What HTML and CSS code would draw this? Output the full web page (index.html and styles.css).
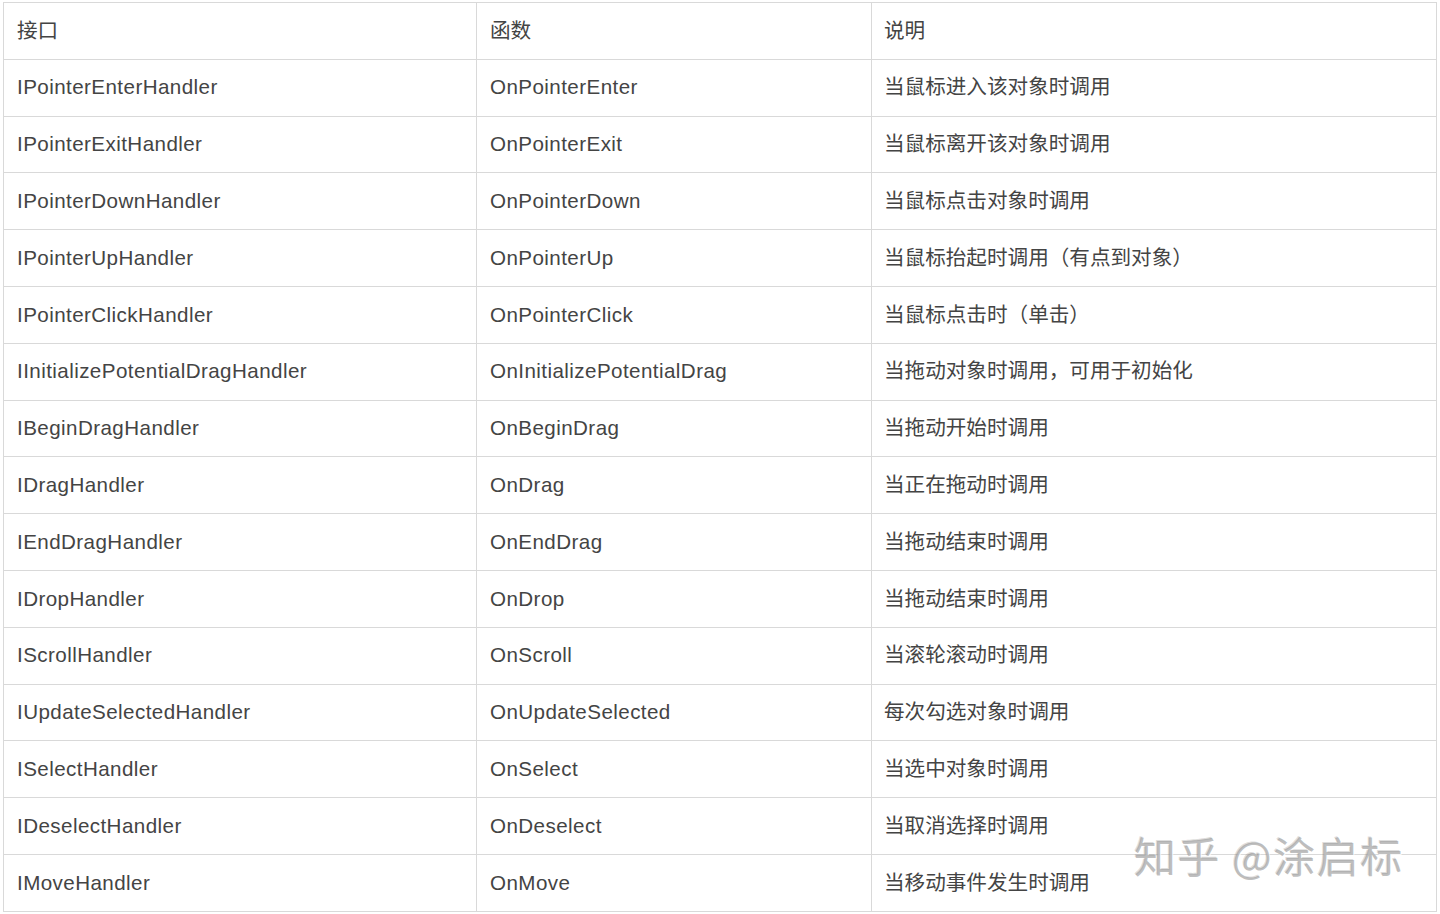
FILE: index.html
```html
<!DOCTYPE html>
<html lang="zh-CN">
<head>
<meta charset="utf-8">
<link rel="stylesheet" href="styles.css">
</head>
<body>
<div class="wrap">
<table class="api">
<colgroup><col class="c1"><col class="c2"><col class="c3"></colgroup>
<tr><td>接口</td><td>函数</td><td>说明</td></tr>
<tr><td>IPointerEnterHandler</td><td>OnPointerEnter</td><td>当鼠标进入该对象时调用</td></tr>
<tr><td>IPointerExitHandler</td><td>OnPointerExit</td><td>当鼠标离开该对象时调用</td></tr>
<tr><td>IPointerDownHandler</td><td>OnPointerDown</td><td>当鼠标点击对象时调用</td></tr>
<tr><td>IPointerUpHandler</td><td>OnPointerUp</td><td>当鼠标抬起时调用（有点到对象）</td></tr>
<tr><td>IPointerClickHandler</td><td>OnPointerClick</td><td>当鼠标点击时（单击）</td></tr>
<tr><td>IInitializePotentialDragHandler</td><td>OnInitializePotentialDrag</td><td>当拖动对象时调用，可用于初始化</td></tr>
<tr><td>IBeginDragHandler</td><td>OnBeginDrag</td><td>当拖动开始时调用</td></tr>
<tr><td>IDragHandler</td><td>OnDrag</td><td>当正在拖动时调用</td></tr>
<tr><td>IEndDragHandler</td><td>OnEndDrag</td><td>当拖动结束时调用</td></tr>
<tr><td>IDropHandler</td><td>OnDrop</td><td>当拖动结束时调用</td></tr>
<tr><td>IScrollHandler</td><td>OnScroll</td><td>当滚轮滚动时调用</td></tr>
<tr><td>IUpdateSelectedHandler</td><td>OnUpdateSelected</td><td>每次勾选对象时调用</td></tr>
<tr><td>ISelectHandler</td><td>OnSelect</td><td>当选中对象时调用</td></tr>
<tr><td>IDeselectHandler</td><td>OnDeselect</td><td>当取消选择时调用</td></tr>
<tr><td>IMoveHandler</td><td>OnMove</td><td>当移动事件发生时调用</td></tr>
</table>
<div class="watermark">知乎 @涂启标</div>
</div>
</body>
</html>
```

FILE: styles.css
```css
html, body {
  margin: 0;
  padding: 0;
  background: #ffffff;
  overflow: hidden;
}
.wrap {
  position: relative;
  padding: 2px 0 0 3px;
  width: 1434px;
}
.api {
  border-collapse: collapse;
  width: 1433px;
  table-layout: fixed;
  font-family: "Liberation Sans", "Noto Sans CJK SC", sans-serif;
  font-size: 20.6px;
  color: #444444;
}
.c1 { width: 473px; }
.c2 { width: 395px; }
.c3 { width: 565px; }
.api td {
  border: 1.5px solid #d9d9d9;
  height: 55.8px;
  padding: 0 0 0 13px;
  vertical-align: middle;
  white-space: nowrap;
  line-height: 1;
}
.api tr + tr td:nth-child(1),
.api tr + tr td:nth-child(2) { letter-spacing: 0.42px; }
.api td:nth-child(3) { padding-left: 12px; }
.watermark {
  position: absolute;
  left: 1134px;
  top: 824px;
  font-family: "Noto Sans CJK SC", sans-serif;
  font-size: 42px;
  color: rgba(150, 150, 150, 0.6);
  text-shadow: 1px 1px 0 rgba(255,255,255,0.8), -1px -1px 0 rgba(120,120,120,0.25);
  letter-spacing: 1.5px;
  white-space: nowrap;
}
```
